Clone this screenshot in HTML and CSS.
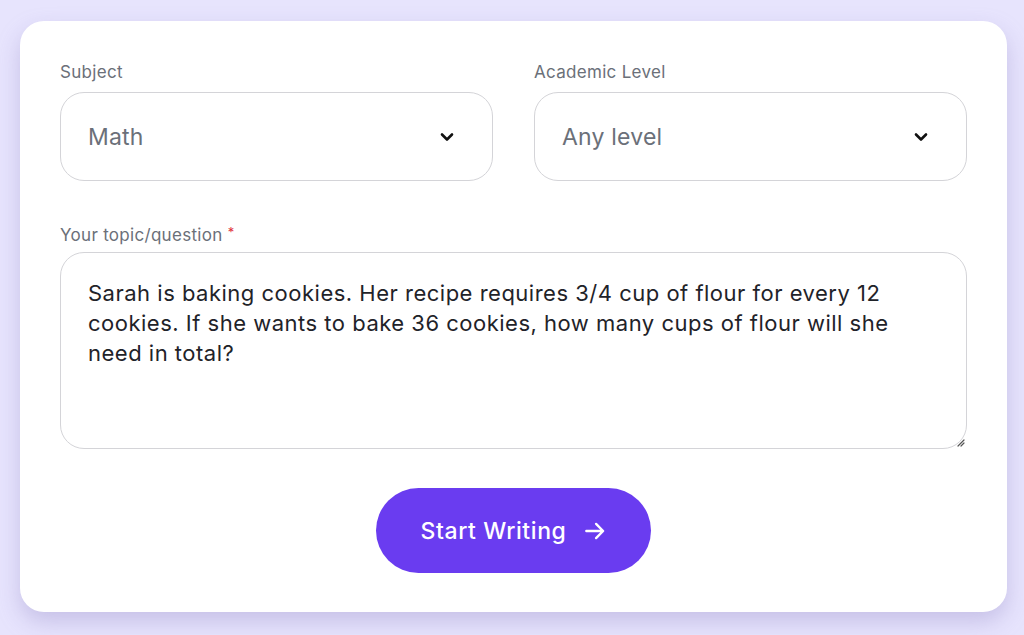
FILE: index.html
```html
<!DOCTYPE html>
<html>
<head>
<meta charset="utf-8">
<link rel="stylesheet" href="styles.css">
</head>
<body>
<div class="card">
  <div class="row">
    <div class="field">
      <div class="label">Subject</div>
      <div class="select">
        <span class="value">Math</span>
        <svg class="chev" width="14" height="10" viewBox="0 0 14 10"><path d="M2 2.5 L7 7.5 L12 2.5" fill="none" stroke="#111" stroke-width="2.6" stroke-linecap="round" stroke-linejoin="round"/></svg>
      </div>
    </div>
    <div class="field">
      <div class="label">Academic Level</div>
      <div class="select">
        <span class="value">Any level</span>
        <svg class="chev" width="14" height="10" viewBox="0 0 14 10"><path d="M2 2.5 L7 7.5 L12 2.5" fill="none" stroke="#111" stroke-width="2.6" stroke-linecap="round" stroke-linejoin="round"/></svg>
      </div>
    </div>
  </div>
  <div class="field topic">
    <div class="label">Your topic/question <span class="req">*</span></div>
    <div class="textarea">
      <p class="text">Sarah is baking cookies. Her recipe requires 3/4 cup of flour for every 12 cookies. If she wants to bake 36 cookies, how many cups of flour will she need in total?</p>
      <svg class="grip" width="10" height="10" viewBox="0 0 10 10"><path d="M9 3 L3 9 M9 6 L6 9" stroke="#555" stroke-width="1.2" stroke-linecap="round"/></svg>
    </div>
  </div>
  <div class="actions">
    <button class="btn">Start Writing
      <svg width="26" height="26" viewBox="0 0 24 24"><path d="M4 12 H19 M13 5.5 L19.5 12 L13 18.5" fill="none" stroke="#fff" stroke-width="2.2" stroke-linecap="round" stroke-linejoin="round"/></svg>
    </button>
  </div>
</div>
</body>
</html>
```
FILE: styles.css
```css
* { box-sizing: border-box; }
html, body { margin: 0; }
body {
  background: #e7e4fd;
  font-family: "Inter", "Liberation Sans", sans-serif;
  padding: 21px 17px 0 20px;
  height: 635px;
  overflow: hidden;
}
.card {
  background: #fff;
  border-radius: 24px;
  width: 987px;
  height: 591px;
  padding: 40px 40px 39px 40px;
  box-shadow: 0 10px 22px rgba(150, 140, 200, 0.4);
}
.row {
  display: grid;
  grid-template-columns: 433px 433px;
  column-gap: 41px;
}
.label {
  font-size: 17px;
  color: #6b7079;
  line-height: 22px;
  height: 22px;
  margin-bottom: 9px;
  letter-spacing: 0.3px;
}
.req { color: #e0323a; font-size: 13px; vertical-align: 4px; }
.select {
  height: 89px;
  border: 1px solid #d4d4d8;
  border-radius: 24px;
  display: flex;
  align-items: center;
  justify-content: space-between;
  padding: 0 38px 0 27px;
}
.value {
  font-size: 23px;
  color: #6b7079;
  letter-spacing: 0.2px;
}
.chev { display: block; }
.topic { margin-top: 40px; }
.textarea {
  position: relative;
  height: 197px;
  border: 1px solid #d4d4d8;
  border-radius: 24px;
  padding: 25px 40px 25px 27px;
}
.text {
  margin: 0;
  font-size: 22px;
  line-height: 30px;
  color: #1f2329;
  letter-spacing: 0.5px;
}
.grip { position: absolute; right: 1px; bottom: 1px; }
.actions {
  display: flex;
  justify-content: center;
  margin-top: 39px;
}
.btn {
  width: 275px;
  height: 85px;
  border: none;
  border-radius: 43px;
  background: #6a3cf0;
  color: #fff;
  font-family: inherit;
  font-size: 23px;
  font-weight: 500;
  display: flex;
  align-items: center;
  justify-content: center;
  gap: 16px;
  letter-spacing: 0.6px;
  padding: 0 0 0 2px;
}
.btn svg { display: block; }
```
